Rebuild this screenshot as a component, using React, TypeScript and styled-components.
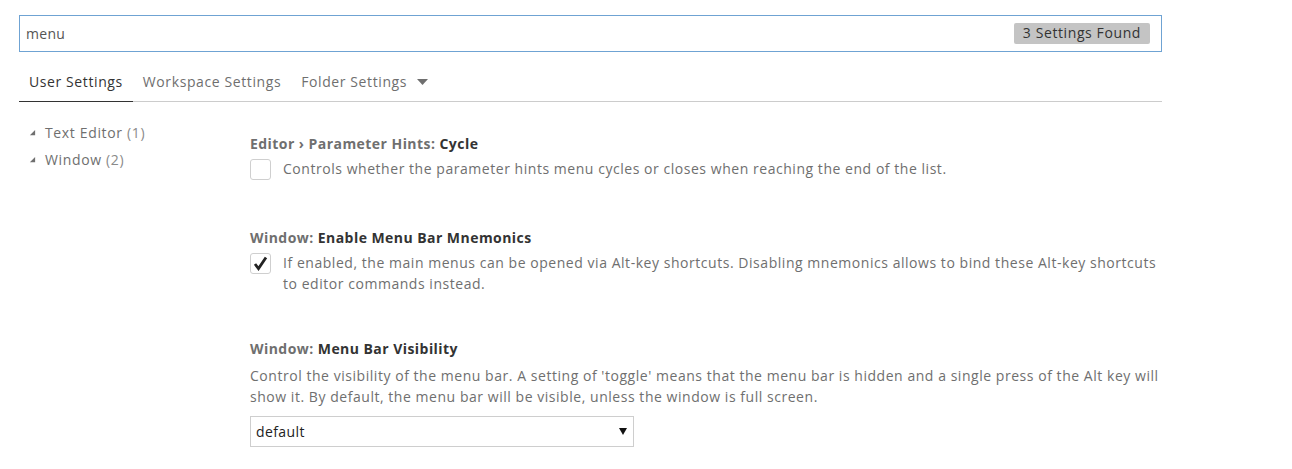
import React from "react";
import styled, { createGlobalStyle } from "styled-components";

const Global = createGlobalStyle`
  html, body { margin: 0; padding: 0; background: #fff; }
  body { font-family: "Open Sans", "Noto Sans", sans-serif; color: #6f6f6f; }
  * { box-sizing: border-box; }
`;

const Page = styled.div`
  width: 1143px;
  margin-left: 19px;
  padding-top: 15px;
`;

const SearchBox = styled.div`
  height: 37px;
  border: 1px solid #6fa3d3;
  display: flex;
  align-items: center;
  justify-content: space-between;
  padding: 0 11px 0 6px;
`;

const SearchText = styled.span`
  font-size: 14px;
  letter-spacing: 0.3px;
  color: #555;
`;

const Badge = styled.span`
  background: #c4c4c4;
  color: #333;
  font-size: 14px;
  letter-spacing: 0.6px;
  border-radius: 2px;
  padding: 1px 9px 2px;
  line-height: 18px;
`;

const TabBar = styled.div`
  display: flex;
  align-items: stretch;
  height: 40px;
  margin-top: 10px;
  border-bottom: 1px solid #cccccc;
`;

const Tab = styled.div<{ $active?: boolean }>`
  display: flex;
  align-items: center;
  gap: 10px;
  padding: 0 10px 1px;
  font-size: 14px;
  letter-spacing: 0.6px;
  color: ${(p) => (p.$active ? "#333" : "#6f6f6f")};
  border-bottom: ${(p) => (p.$active ? "1.5px solid #333" : "none")};
  margin-bottom: -1px;
`;

const Body = styled.div`
  display: flex;
`;

const Tree = styled.div`
  width: 231px;
  padding-top: 17px;
  display: flex;
  flex-direction: column;
`;

const TreeItem = styled.div`
  display: flex;
  align-items: center;
  height: 27px;
  padding-left: 10px;
  font-size: 14px;
  letter-spacing: 0.65px;
  color: #6f6f6f;
  gap: 9px;
`;

const Count = styled.span`
  color: #8a8a8a;
`;

const Settings = styled.div`
  flex: 1;
  padding-top: 32px;
  display: flex;
  flex-direction: column;
`;

const Setting = styled.div<{ $gap: number }>`
  margin-bottom: ${(p) => p.$gap}px;
`;

const Title = styled.div`
  font-size: 14px;
  font-weight: 700;
  letter-spacing: 0.45px;
  color: #6f6f6f;
  line-height: 20px;
`;

const Strong = styled.span`
  color: #333;
`;

const CheckRow = styled.div`
  display: flex;
  align-items: flex-start;
  gap: 12px;
  margin-top: 4px;
`;

const Box = styled.div`
  width: 21px;
  height: 21px;
  flex: none;
  border: 1px solid #cfcfcf;
  border-radius: 3px;
  display: flex;
  align-items: center;
  justify-content: center;
  margin-top: 1px;
`;

const Desc = styled.div<{ $top?: number }>`
  font-size: 14px;
  letter-spacing: 0.54px;
  line-height: 21px;
  color: #6f6f6f;
  margin-top: ${(p) => p.$top ?? 0}px;
`;

const Select = styled.div`
  margin-top: 9px;
  width: 384px;
  height: 31px;
  border: 1px solid #cecece;
  display: flex;
  align-items: center;
  justify-content: space-between;
  padding: 0 6px 0 5px;
  font-size: 14px;
  letter-spacing: 0.4px;
  color: #222;
`;

const Tri = ({ size = 8 }: { size?: number }) => (
  <svg width={size} height={size} viewBox="0 0 8 8">
    <path d="M7 1 L7 7 L1 7 Z" fill="#6f6f6f" />
  </svg>
);

export default function App() {
  return (
    <>
      <Global />
      <Page>
        <SearchBox>
          <SearchText>menu</SearchText>
          <Badge>3 Settings Found</Badge>
        </SearchBox>
        <TabBar>
          <Tab $active>User Settings</Tab>
          <Tab>Workspace Settings</Tab>
          <Tab>
            Folder Settings
            <svg width="11" height="6" viewBox="0 0 11 6">
              <path d="M0 0 L11 0 L5.5 6 Z" fill="#6f6f6f" />
            </svg>
          </Tab>
        </TabBar>
        <Body>
          <Tree>
            <TreeItem>
              <Tri size={7} />
              <span>
                Text Editor <Count>(1)</Count>
              </span>
            </TreeItem>
            <TreeItem>
              <Tri size={7} />
              <span>
                Window <Count>(2)</Count>
              </span>
            </TreeItem>
          </Tree>
          <Settings>
            <Setting $gap={48}>
              <Title>
                Editor › Parameter Hints: <Strong>Cycle</Strong>
              </Title>
              <CheckRow>
                <Box />
                <Desc>
                  Controls whether the parameter hints menu cycles or closes when reaching the end of the list.
                </Desc>
              </CheckRow>
            </Setting>
            <Setting $gap={45}>
              <Title>
                Window: <Strong>Enable Menu Bar Mnemonics</Strong>
              </Title>
              <CheckRow>
                <Box>
                  <svg width="15" height="15" viewBox="0 0 15 15">
                    <path
                      d="M2 8 L5.5 12.5 L13 1.5"
                      fill="none"
                      stroke="#222"
                      strokeWidth="2.8"
                      strokeLinejoin="miter"
                    />
                  </svg>
                </Box>
                <Desc>
                  If enabled, the main menus can be opened via Alt-key shortcuts. Disabling mnemonics allows to bind
                  these Alt-key shortcuts to editor commands instead.
                </Desc>
              </CheckRow>
            </Setting>
            <Setting $gap={0}>
              <Title>
                Window: <Strong>Menu Bar Visibility</Strong>
              </Title>
              <Desc $top={6}>
                Control the visibility of the menu bar. A setting of 'toggle' means that the menu bar is hidden and a
                single press of the Alt key will show it. By default, the menu bar will be visible, unless the window
                is full screen.
              </Desc>
              <Select>
                <span>default</span>
                <svg width="8" height="7" viewBox="0 0 8 7">
                  <path d="M0 0 L8 0 L4 7 Z" fill="#111" />
                </svg>
              </Select>
            </Setting>
          </Settings>
        </Body>
      </Page>
    </>
  );
}
